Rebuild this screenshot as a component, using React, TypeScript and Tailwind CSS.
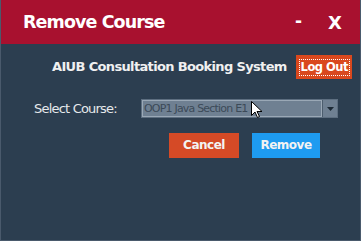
import React from "react";

export default function App() {
  return (
    <div className="w-[361px] h-[241px] overflow-hidden bg-[#2c3e50] flex flex-col border-x border-b border-[#4a5a6c]" style={{ fontFamily: '"DejaVu Sans", Verdana, sans-serif' }}>
      <div className="h-[44px] shrink-0 bg-[#a8112f] flex items-center pl-[22px] pr-[18px] text-white">
        <div className="text-[17.5px] font-bold tracking-[-0.9px] flex-1">Remove Course</div>
        <div className="text-[17px] font-bold mr-[26px]">-</div>
        <div className="text-[18px] font-bold">X</div>
      </div>
      <div className="flex items-center mt-[11px] pl-[51px]">
        <div className="text-[13px] font-bold text-[#f0f0f0] tracking-[-0.65px] w-[244px] shrink-0 whitespace-nowrap">AIUB Consultation Booking System</div>
        <button className="w-[56px] h-[24px] shrink-0 bg-[#d9481e] text-white text-[11.5px] font-bold flex items-center justify-end pr-[2px]">
          <span className="border border-dotted border-white px-[1px] leading-[15px] tracking-[-0.5px] whitespace-nowrap">Log Out</span>
        </button>
      </div>
      <div className="flex items-center mt-[20px] pl-[33px]">
        <div className="text-[13px] text-[#e6e9ec] w-[107px] tracking-[-0.8px]">Select Course:</div>
        <div className="relative w-[197px] h-[19px] border border-[#5d6e80] bg-[#7a8a9a] flex">
          <div className="flex-1 border border-[#9aa8b6] bg-[#6f8092] text-[11px] text-[#3c4a58] leading-[15px] pl-[1px] tracking-[-0.8px] whitespace-nowrap">OOP1 Java Section E1</div>
          <div className="w-[15px] bg-[#6f8092] border-l border-[#4c5d6e] flex items-center justify-center">
            <svg width="7" height="4" viewBox="0 0 7 4"><path d="M0 0h7L3.5 4z" fill="#1d2a36" /></svg>
          </div>
          <svg className="absolute left-[109px] top-[1px]" width="11" height="17" viewBox="0 0 11 17">
            <path d="M0.5 0.5v14l3.5-3.5 2.5 5.5 2-1-2.5-5h5z" fill="#fff" stroke="#000" strokeWidth="1" />
          </svg>
        </div>
      </div>
      <div className="flex mt-[14px] pl-[168px] gap-[13px]">
        <button className="w-[70px] h-[25px] bg-[#d54a26] text-[#f3f3f3] text-[12px] font-bold tracking-[-0.5px]">Cancel</button>
        <button className="w-[68px] h-[25px] bg-[#1e9bf0] text-[#f3f3f3] text-[12px] font-bold tracking-[-0.5px]">Remove</button>
      </div>
    </div>
  );
}
